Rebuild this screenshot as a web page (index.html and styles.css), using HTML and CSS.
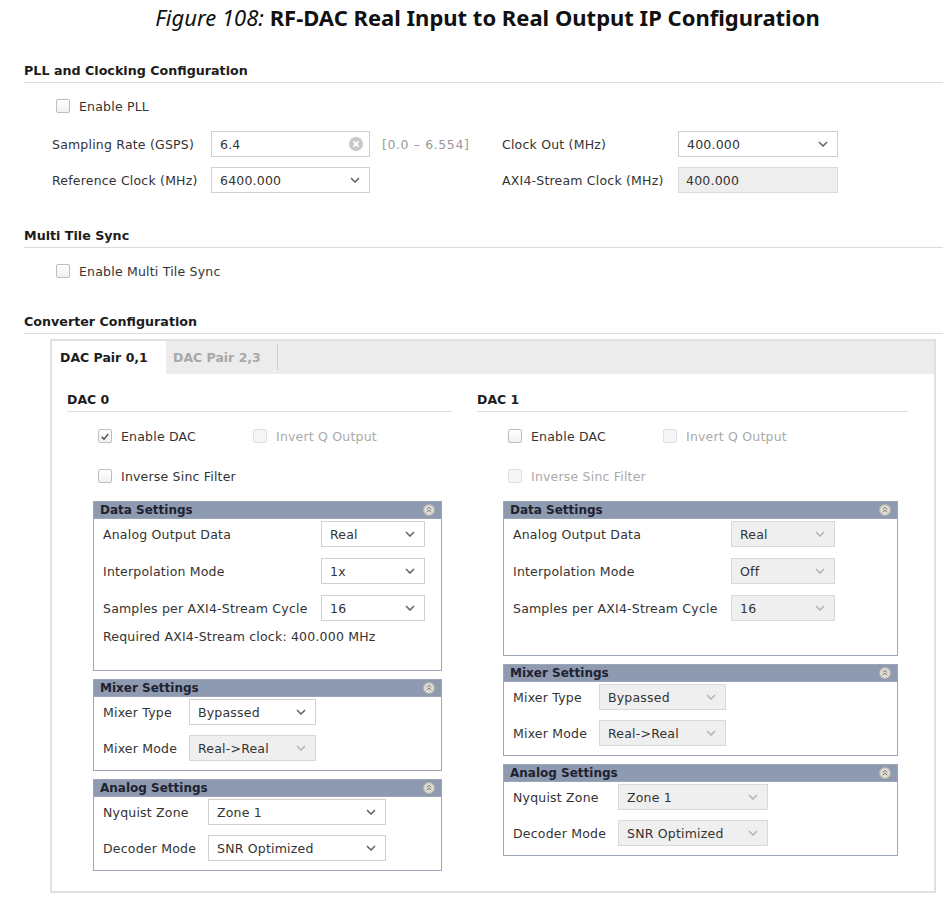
FILE: index.html
```html
<!DOCTYPE html>
<html>
<head>
<meta charset="utf-8">
<title>RF-DAC Real Input to Real Output IP Configuration</title>
<link rel="stylesheet" href="styles.css">
</head>
<body>
<h1 class="title"><i>Figure 108:</i> <b>RF-DAC Real Input to Real Output IP Configuration</b></h1>

<section class="sec sec-pll">
  <h2 class="sec-head">PLL and Clocking Configuration</h2>
  <label class="chk chk-top"><span class="box"></span><span>Enable PLL</span></label>
  <div class="clk-grid">
    <span class="lbl">Sampling Rate (GSPS)</span>
    <div class="field field-clear"><span>6.4</span><svg class="clear" viewBox="0 0 14 14" width="14" height="14"><circle cx="7" cy="7" r="7" fill="#c8c8c8"/><path d="M4.4 4.4l5.2 5.2M9.6 4.4l-5.2 5.2" stroke="#fff" stroke-width="1.8"/></svg></div>
    <span class="range">[0.0 – 6.554]</span>
    <span class="lbl">Clock Out (MHz)</span>
    <div class="field"><span>400.000</span><svg class="chev" viewBox="0 0 10 6" width="10" height="6"><path d="M1 1l4 4 4-4" fill="none" stroke="currentColor" stroke-width="1.6"/></svg></div>

    <span class="lbl">Reference Clock (MHz)</span>
    <div class="field"><span>6400.000</span><svg class="chev" viewBox="0 0 10 6" width="10" height="6"><path d="M1 1l4 4 4-4" fill="none" stroke="currentColor" stroke-width="1.6"/></svg></div>
    <span></span>
    <span class="lbl">AXI4-Stream Clock (MHz)</span>
    <div class="field ro"><span>400.000</span></div>
  </div>
</section>

<section class="sec sec-mts">
  <h2 class="sec-head">Multi Tile Sync</h2>
  <label class="chk chk-top"><span class="box"></span><span>Enable Multi Tile Sync</span></label>
</section>

<section class="sec sec-conv">
  <h2 class="sec-head">Converter Configuration</h2>
  <div class="tabs">
    <div class="tab-strip">
      <div class="tab active">DAC Pair 0,1</div>
      <div class="tab">DAC Pair 2,3</div>
    </div>
    <div class="tab-body">
      <!-- DAC 0 -->
      <div class="dac">
        <h3 class="dac-head">DAC 0</h3>
        <div class="chk-row">
          <label class="chk chk-first"><span class="box checked"><svg viewBox="0 0 13 13" width="13" height="13"><path d="M3 6.8l2.4 2.6L10 3.6" fill="none" stroke="#444" stroke-width="1.4"/></svg></span><span>Enable DAC</span></label>
          <label class="chk dis"><span class="box"></span><span>Invert Q Output</span></label>
        </div>
        <div class="chk-row">
          <label class="chk"><span class="box"></span><span>Inverse Sinc Filter</span></label>
        </div>

        <div class="panel panel-first">
          <div class="panel-head"><span>Data Settings</span><svg viewBox="0 0 12 12" width="12" height="12"><circle cx="6" cy="6" r="5.5" fill="#dddbd3" stroke="#b3b1a9"/><path d="M3.8 5.4L6 3.4l2.2 2M3.8 8.1L6 6.1l2.2 2" fill="none" stroke="#7c7a72" stroke-width="1"/></svg></div>
          <div class="panel-body form data-form data-req">
            <span class="lbl">Analog Output Data</span>
            <div class="field w-data"><span>Real</span><svg class="chev" viewBox="0 0 10 6" width="10" height="6"><path d="M1 1l4 4 4-4" fill="none" stroke="currentColor" stroke-width="1.6"/></svg></div>
            <span class="lbl">Interpolation Mode</span>
            <div class="field w-data"><span>1x</span><svg class="chev" viewBox="0 0 10 6" width="10" height="6"><path d="M1 1l4 4 4-4" fill="none" stroke="currentColor" stroke-width="1.6"/></svg></div>
            <span class="lbl">Samples per AXI4-Stream Cycle</span>
            <div class="field w-data"><span>16</span><svg class="chev" viewBox="0 0 10 6" width="10" height="6"><path d="M1 1l4 4 4-4" fill="none" stroke="currentColor" stroke-width="1.6"/></svg></div>
            <p class="req">Required AXI4-Stream clock: 400.000 MHz</p>
          </div>
        </div>

        <div class="panel">
          <div class="panel-head"><span>Mixer Settings</span><svg viewBox="0 0 12 12" width="12" height="12"><circle cx="6" cy="6" r="5.5" fill="#dddbd3" stroke="#b3b1a9"/><path d="M3.8 5.4L6 3.4l2.2 2M3.8 8.1L6 6.1l2.2 2" fill="none" stroke="#7c7a72" stroke-width="1"/></svg></div>
          <div class="panel-body form mix-form">
            <span class="lbl">Mixer Type</span>
            <div class="field w-mix"><span>Bypassed</span><svg class="chev" viewBox="0 0 10 6" width="10" height="6"><path d="M1 1l4 4 4-4" fill="none" stroke="currentColor" stroke-width="1.6"/></svg></div>
            <span class="lbl">Mixer Mode</span>
            <div class="field dis w-mix"><span>Real-&gt;Real</span><svg class="chev" viewBox="0 0 10 6" width="10" height="6"><path d="M1 1l4 4 4-4" fill="none" stroke="currentColor" stroke-width="1.6"/></svg></div>
          </div>
        </div>

        <div class="panel">
          <div class="panel-head"><span>Analog Settings</span><svg viewBox="0 0 12 12" width="12" height="12"><circle cx="6" cy="6" r="5.5" fill="#dddbd3" stroke="#b3b1a9"/><path d="M3.8 5.4L6 3.4l2.2 2M3.8 8.1L6 6.1l2.2 2" fill="none" stroke="#7c7a72" stroke-width="1"/></svg></div>
          <div class="panel-body form ana-form">
            <span class="lbl">Nyquist Zone</span>
            <div class="field w-ana0"><span>Zone 1</span><svg class="chev" viewBox="0 0 10 6" width="10" height="6"><path d="M1 1l4 4 4-4" fill="none" stroke="currentColor" stroke-width="1.6"/></svg></div>
            <span class="lbl">Decoder Mode</span>
            <div class="field w-ana0"><span>SNR Optimized</span><svg class="chev" viewBox="0 0 10 6" width="10" height="6"><path d="M1 1l4 4 4-4" fill="none" stroke="currentColor" stroke-width="1.6"/></svg></div>
          </div>
        </div>
      </div>

      <!-- DAC 1 -->
      <div class="dac">
        <h3 class="dac-head">DAC 1</h3>
        <div class="chk-row">
          <label class="chk chk-first"><span class="box"></span><span>Enable DAC</span></label>
          <label class="chk dis"><span class="box"></span><span>Invert Q Output</span></label>
        </div>
        <div class="chk-row">
          <label class="chk dis"><span class="box"></span><span>Inverse Sinc Filter</span></label>
        </div>

        <div class="panel panel-first">
          <div class="panel-head"><span>Data Settings</span><svg viewBox="0 0 12 12" width="12" height="12"><circle cx="6" cy="6" r="5.5" fill="#dddbd3" stroke="#b3b1a9"/><path d="M3.8 5.4L6 3.4l2.2 2M3.8 8.1L6 6.1l2.2 2" fill="none" stroke="#7c7a72" stroke-width="1"/></svg></div>
          <div class="panel-body form data-form data-noreq">
            <span class="lbl">Analog Output Data</span>
            <div class="field dis w-data"><span>Real</span><svg class="chev" viewBox="0 0 10 6" width="10" height="6"><path d="M1 1l4 4 4-4" fill="none" stroke="currentColor" stroke-width="1.6"/></svg></div>
            <span class="lbl">Interpolation Mode</span>
            <div class="field dis w-data"><span>Off</span><svg class="chev" viewBox="0 0 10 6" width="10" height="6"><path d="M1 1l4 4 4-4" fill="none" stroke="currentColor" stroke-width="1.6"/></svg></div>
            <span class="lbl">Samples per AXI4-Stream Cycle</span>
            <div class="field dis w-data"><span>16</span><svg class="chev" viewBox="0 0 10 6" width="10" height="6"><path d="M1 1l4 4 4-4" fill="none" stroke="currentColor" stroke-width="1.6"/></svg></div>
          </div>
        </div>

        <div class="panel">
          <div class="panel-head"><span>Mixer Settings</span><svg viewBox="0 0 12 12" width="12" height="12"><circle cx="6" cy="6" r="5.5" fill="#dddbd3" stroke="#b3b1a9"/><path d="M3.8 5.4L6 3.4l2.2 2M3.8 8.1L6 6.1l2.2 2" fill="none" stroke="#7c7a72" stroke-width="1"/></svg></div>
          <div class="panel-body form mix-form">
            <span class="lbl">Mixer Type</span>
            <div class="field dis w-mix"><span>Bypassed</span><svg class="chev" viewBox="0 0 10 6" width="10" height="6"><path d="M1 1l4 4 4-4" fill="none" stroke="currentColor" stroke-width="1.6"/></svg></div>
            <span class="lbl">Mixer Mode</span>
            <div class="field dis w-mix"><span>Real-&gt;Real</span><svg class="chev" viewBox="0 0 10 6" width="10" height="6"><path d="M1 1l4 4 4-4" fill="none" stroke="currentColor" stroke-width="1.6"/></svg></div>
          </div>
        </div>

        <div class="panel">
          <div class="panel-head"><span>Analog Settings</span><svg viewBox="0 0 12 12" width="12" height="12"><circle cx="6" cy="6" r="5.5" fill="#dddbd3" stroke="#b3b1a9"/><path d="M3.8 5.4L6 3.4l2.2 2M3.8 8.1L6 6.1l2.2 2" fill="none" stroke="#7c7a72" stroke-width="1"/></svg></div>
          <div class="panel-body form ana-form">
            <span class="lbl">Nyquist Zone</span>
            <div class="field dis w-ana1"><span>Zone 1</span><svg class="chev" viewBox="0 0 10 6" width="10" height="6"><path d="M1 1l4 4 4-4" fill="none" stroke="currentColor" stroke-width="1.6"/></svg></div>
            <span class="lbl">Decoder Mode</span>
            <div class="field dis w-ana1"><span>SNR Optimized</span><svg class="chev" viewBox="0 0 10 6" width="10" height="6"><path d="M1 1l4 4 4-4" fill="none" stroke="currentColor" stroke-width="1.6"/></svg></div>
          </div>
        </div>
      </div>
    </div>
  </div>
</section>
</body>
</html>
```

FILE: styles.css
```css
* { box-sizing: border-box; }

body {
  margin: 0;
  background: #fff;
  font-family: "DejaVu Sans", "Noto Sans", sans-serif;
  font-size: 12.5px;
  letter-spacing: 0.2px;
  color: #333;
}

.title {
  margin: 0;
  height: 36px;
  line-height: 34px;
  padding-left: 32px;
  text-align: center;
  font-family: "Noto Sans", "Open Sans", sans-serif;
  font-size: 22px;
  font-weight: 400;
  letter-spacing: 0;
  color: #111;
}
.title i { font-style: italic; font-weight: 400; }
.title b { font-weight: 700; }

.sec { margin-left: 24px; }
.sec-pll { margin-top: 26px; }
.sec-mts { margin-top: 34px; }
.sec-conv { margin-top: 30px; }

.sec-head {
  margin: 0;
  font-size: 12.7px;
  font-weight: 700;
  letter-spacing: 0;
  line-height: 18px;
  padding-bottom: 2px;
  border-bottom: 1px solid #dcdcdc;
  color: #1c1c1c;
}

/* checkboxes */
.chk {
  display: flex;
  align-items: center;
  height: 24px;
  gap: 9px;
  color: #333;
}
.chk-top { margin: 11px 0 0 32px; }
.box {
  width: 14px;
  height: 14px;
  border: 1px solid #bdbdbd;
  border-radius: 2px;
  background: linear-gradient(#ffffff, #f1f1f1);
  display: flex;
  align-items: center;
  justify-content: center;
  flex: none;
}
.box svg { display: block; }
.chk.dis { color: #aaa; }
.chk.dis .box { border-color: #e0e0e0; background: #f6f6f6; }

/* top clocking grid */
.clk-grid {
  margin: 13px 0 0 28px;
  display: grid;
  grid-template-columns: 159px 159px 132px 176px 160px;
  grid-auto-rows: 26px;
  row-gap: 10px;
  align-items: center;
}
.range {
  padding-left: 12px;
  color: #9a9a9a;
  letter-spacing: 0.6px;
}

/* fields */
.field {
  height: 26px;
  border: 1px solid #d0d0d0;
  background: #fff;
  display: flex;
  align-items: center;
  justify-content: space-between;
  padding: 0 9px 0 8px;
  color: #333;
}
.field-clear { padding-right: 6px; }
.field .chev { color: #666; flex: none; }
.field .clear { flex: none; }
.field.ro { background: #eeeeee; border-color: #dadada; padding-left: 7px; }
.field.dis { background: #efefef; border-color: #d8d8d8; }
.field.dis .chev { color: #b5b5b5; }

/* tabs */
.tabs {
  margin: 5px 0 0 26px;
  width: 886px;
  height: 554px;
  border: 2px solid #e1e1e1;
}
.tab-strip {
  height: 33px;
  background: #ececec;
  display: flex;
  align-items: stretch;
}
.tab {
  display: flex;
  align-items: center;
  font-weight: 700;
  font-size: 12.5px;
  letter-spacing: 0;
}
.tab.active {
  width: 114px;
  background: #fff;
  padding-left: 8px;
  color: #1c1c1c;
}
.tab:not(.active) {
  padding: 0 16px 0 7px;
  color: #a8a8a8;
  border-right: 1px solid #cfcfcf;
  margin: 3px 0 4px;
}

.tab-body {
  display: grid;
  grid-template-columns: 385px 431px;
  column-gap: 25px;
  padding: 17px 0 0 15px;
}

.dac-head {
  margin: 0;
  font-size: 12.5px;
  font-weight: 700;
  letter-spacing: 0;
  line-height: 18px;
  padding-bottom: 2px;
  border-bottom: 1px solid #dedede;
  color: #1c1c1c;
}
.chk-row {
  display: flex;
  margin: 12px 0 0 31px;
}
.chk-row + .chk-row { margin-top: 16px; }
.chk-first { width: 155px; }

/* panels */
.panel {
  margin: 8px 10px 0 26px;
  border: 1px solid #9aa5ba;
}
.panel-first { margin-top: 13px; }
.panel-head {
  height: 16px;
  background: #8e9ab0;
  display: flex;
  align-items: center;
  justify-content: space-between;
  padding: 0 6px 0 6px;
  font-weight: 700;
  font-size: 12px;
  letter-spacing: 0;
  color: #1e2230;
  line-height: 16px;
}
.panel-head svg { display: block; }
.panel-body {
  background: #fff;
  border-top: 1px solid #9aa5ba;
}
.form {
  display: grid;
  grid-auto-rows: 26px;
  row-gap: 10px;
  align-items: center;
  padding: 2px 0 9px 9px;
}
.data-form { grid-template-columns: 218px 104px; row-gap: 11px; }
.data-req { padding-bottom: 24px; grid-template-rows: 26px 26px 26px auto; }
.data-noreq { padding-bottom: 34px; }
.mix-form { grid-template-columns: 86px 127px; }
.ana-form { grid-template-columns: 105px auto; justify-content: start; }
.w-ana0 { width: 178px; }
.w-ana1 { width: 150px; }

.req {
  grid-column: 1 / -1;
  margin: -4px 0 0;
  line-height: 18px;
  height: 18px;
}
```
